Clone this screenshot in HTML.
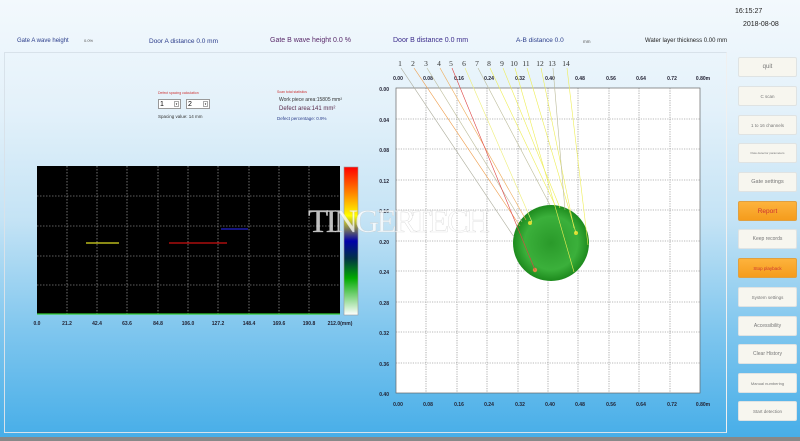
<!DOCTYPE html>
<html><head><meta charset="utf-8"><style>
*{margin:0;padding:0;box-sizing:border-box}
body{width:800px;height:441px;overflow:hidden;font-family:"Liberation Sans",sans-serif;position:relative;
background:linear-gradient(180deg,#f3f9fd 0%,#e3f1fa 25%,#c4e3f5 50%,#7fc6ee 75%,#45ade8 100%);}
.t{position:absolute;font-size:7px;white-space:nowrap}
.btn{position:absolute;left:738px;width:59px;height:20px;background:#f7f6ef;border:1px solid #dfe3e3;border-radius:2px;font-size:4.5px;color:#777;text-align:center;line-height:19px}
.btn.o{background:linear-gradient(#fdb33d,#f59c1c);border-color:#e0a040;color:#c33}
</style></head><body>
<div class="t" style="left:735px;top:8px;font-size:7px;color:#222">16:15:27</div>
<div class="t" style="left:743px;top:21px;font-size:7px;color:#222">2018-08-08</div>
<div class="t" style="left:17px;top:38px;font-size:6px;color:#2a3c8a">Gate A wave height</div>
<div class="t" style="left:84px;top:38px;font-size:4px;color:#555">0.0%</div>
<div class="t" style="left:149px;top:38px;font-size:6.5px;color:#2a3c8a">Door A distance 0.0 mm</div>
<div class="t" style="left:270px;top:37px;font-size:7px;color:#5a2a6a">Gate B wave height 0.0 %</div>
<div class="t" style="left:393px;top:37px;font-size:7px;color:#3a2a8a">Door B distance 0.0 mm</div>
<div class="t" style="left:516px;top:37px;font-size:6.5px;color:#2a3c8a">A-B distance 0.0</div>
<div class="t" style="left:583px;top:39px;font-size:4.5px;color:#555">mm</div>
<div class="t" style="left:645px;top:38px;font-size:6px;color:#222">Water layer thickness 0.00 mm</div>
<div style="position:absolute;left:4px;top:52px;width:723px;height:381px;border:1px solid #d8e2ea;border-right-color:#f0f0f0"></div>
<div style="position:absolute;left:0;top:437px;width:800px;height:4px;background:#888"></div>
<div class="t" style="left:158px;top:91px;font-size:3.5px;color:#c33">Defect spacing calculation</div>
<div style="position:absolute;left:158px;top:99px;width:23px;height:10px;background:#fff;border:1px solid #999;font-size:7px;line-height:9px;padding-left:1px">1<span style="position:absolute;right:1px;top:1px;width:5px;height:6px;border:1px solid #aaa;font-size:3px;line-height:5px;text-align:center">▾</span></div>
<div style="position:absolute;left:186px;top:99px;width:24px;height:10px;background:#fff;border:1px solid #999;font-size:7px;line-height:9px;padding-left:1px">2<span style="position:absolute;right:1px;top:1px;width:5px;height:6px;border:1px solid #aaa;font-size:3px;line-height:5px;text-align:center">▾</span></div>
<div class="t" style="left:158px;top:114px;font-size:4.5px;color:#333">Spacing value: 14 mm</div>
<div class="t" style="left:277px;top:90px;font-size:3.5px;color:#c33">Scan total statistics</div>
<div class="t" style="left:279px;top:97px;font-size:5px;color:#333">Work piece area:15805 mm²</div>
<div class="t" style="left:279px;top:106px;font-size:6px;color:#5a2a4a">Defect area:141 mm²</div>
<div class="t" style="left:277px;top:116px;font-size:4.5px;color:#2a3c8a">Defect percentage: 0.9%</div>

<svg style="position:absolute;left:0;top:0" width="800" height="441" font-family="Liberation Sans" font-weight="bold" font-size="5">
<defs><linearGradient id="cb" x1="0" y1="0" x2="0" y2="1">
<stop offset="0" stop-color="#f00"/><stop offset=".18" stop-color="#f80"/><stop offset=".33" stop-color="#ff0"/><stop offset=".5" stop-color="#00a"/><stop offset=".62" stop-color="#034"/><stop offset=".75" stop-color="#0a0"/><stop offset="1" stop-color="#fff"/></linearGradient>
<radialGradient id="cg"><stop offset="0" stop-color="#2a9a2a"/><stop offset=".7" stop-color="#3bb03b"/><stop offset="1" stop-color="#1d8a1d"/></radialGradient></defs>
<rect x="37" y="166" width="303" height="148" fill="#000"/>
<g stroke="#bbb" stroke-width=".6" stroke-dasharray="1.5,1.5">
<path d="M67 166V314M97 166V314M127 166V314M158 166V314M188 166V314M218 166V314M249 166V314M279 166V314M309 166V314M37 196H340M37 226H340M37 256H340M37 285H340"/></g>
<line x1="37" y1="314" x2="340" y2="314" stroke="#3c3" stroke-width="1.2"/>
<line x1="86" y1="243" x2="119" y2="243" stroke="#dd2" stroke-width="1.3"/>
<line x1="169" y1="243" x2="227" y2="243" stroke="#c11" stroke-width="1.3"/>
<line x1="221" y1="229" x2="248" y2="229" stroke="#22c" stroke-width="1.3"/>
<rect x="344" y="167" width="14" height="148" fill="url(#cb)" stroke="#999" stroke-width=".6"/>
<g fill="#223" text-anchor="middle">
<text x="37" y="325">0.0</text><text x="67" y="325">21.2</text><text x="97" y="325">42.4</text><text x="127" y="325">63.6</text><text x="158" y="325">84.8</text><text x="188" y="325">106.0</text><text x="218" y="325">127.2</text><text x="249" y="325">148.4</text><text x="279" y="325">169.6</text><text x="309" y="325">190.8</text><text x="340" y="325">212.0(mm)</text></g>

<rect x="396" y="88" width="304" height="305" fill="#fff" stroke="#666" stroke-width=".7"/>
<g stroke="#777" stroke-width=".6" stroke-dasharray="1.2,1.2">
<path d="M426 88V393M457 88V393M487 88V393M518 88V393M548 88V393M578 88V393M609 88V393M639 88V393M670 88V393M396 119H700M396 149H700M396 180H700M396 210H700M396 241H700M396 271H700M396 302H700M396 332H700M396 363H700"/></g>
<g fill="#223" text-anchor="middle">
<text x="398" y="80">0.00</text><text x="428" y="80">0.08</text><text x="459" y="80">0.16</text><text x="489" y="80">0.24</text><text x="520" y="80">0.32</text><text x="550" y="80">0.40</text><text x="580" y="80">0.48</text><text x="611" y="80">0.56</text><text x="641" y="80">0.64</text><text x="672" y="80">0.72</text><text x="703" y="80">0.80m</text>
<text x="398" y="406">0.00</text><text x="428" y="406">0.08</text><text x="459" y="406">0.16</text><text x="489" y="406">0.24</text><text x="520" y="406">0.32</text><text x="550" y="406">0.40</text><text x="580" y="406">0.48</text><text x="611" y="406">0.56</text><text x="641" y="406">0.64</text><text x="672" y="406">0.72</text><text x="703" y="406">0.80m</text></g>
<g fill="#223" text-anchor="end">
<text x="389" y="91">0.00</text><text x="389" y="122">0.04</text><text x="389" y="152">0.08</text><text x="389" y="183">0.12</text><text x="389" y="213">0.16</text><text x="389" y="244">0.20</text><text x="389" y="274">0.24</text><text x="389" y="305">0.28</text><text x="389" y="335">0.32</text><text x="389" y="366">0.36</text><text x="389" y="396">0.40</text></g>
<circle cx="551" cy="243" r="38" fill="url(#cg)"/>
<circle cx="530" cy="223" r="2" fill="#dd3"/><circle cx="576" cy="233" r="2" fill="#dd3"/><circle cx="535" cy="270" r="2.2" fill="#d84"/>
<g stroke-width=".6" fill="none">
<line x1="401" y1="68" x2="514" y2="237" stroke="#aa9"/>
<line x1="414" y1="68" x2="520" y2="226" stroke="#e94"/>
<line x1="427" y1="68" x2="522" y2="222" stroke="#bb9"/>
<line x1="440" y1="68" x2="526" y2="220" stroke="#ea5"/>
<line x1="452" y1="68" x2="535" y2="270" stroke="#d44"/>
<line x1="465" y1="68" x2="532" y2="222" stroke="#ee7"/>
<line x1="478" y1="68" x2="550" y2="205" stroke="#bb9"/>
<line x1="490" y1="68" x2="555" y2="205" stroke="#ee5"/>
<line x1="503" y1="68" x2="560" y2="208" stroke="#ee5"/>
<line x1="515" y1="68" x2="574" y2="272" stroke="#ee5"/>
<line x1="527" y1="68" x2="576" y2="233" stroke="#ee5"/>
<line x1="541" y1="68" x2="574" y2="228" stroke="#ee5"/>
<line x1="553" y1="68" x2="565" y2="210" stroke="#bb9"/>
<line x1="567" y1="68" x2="588" y2="245" stroke="#ee5"/></g>
<g fill="#333" font-weight="normal" font-size="7.5" font-family="Liberation Serif" text-anchor="middle">
<text x="400" y="66">1</text><text x="413" y="66">2</text><text x="426" y="66">3</text><text x="439" y="66">4</text><text x="451" y="66">5</text><text x="464" y="66">6</text><text x="477" y="66">7</text><text x="489" y="66">8</text><text x="502" y="66">9</text><text x="514" y="66">10</text><text x="526" y="66">11</text><text x="540" y="66">12</text><text x="552" y="66">13</text><text x="566" y="66">14</text></g>
<text x="308" y="232" font-family="Liberation Serif" font-weight="normal" font-size="33" fill="#fff" fill-opacity=".75" stroke="#ccc" stroke-width=".3" textLength="182">TINGERTECH</text>
</svg>

<div class="btn" style="top:57px;font-size:6px">quit</div>
<div class="btn" style="top:86px">C scan</div>
<div class="btn" style="top:115px">1 to 16 channels</div>
<div class="btn" style="top:143px;font-size:3px">Flaw detector parameters</div>
<div class="btn" style="top:172px;font-size:5.5px">Gate settings</div>
<div class="btn o" style="top:201px;font-size:6.5px">Report</div>
<div class="btn" style="top:229px;font-size:5px">Keep records</div>
<div class="btn o" style="top:258px;font-size:4.5px">Stop playback</div>
<div class="btn" style="top:287px">System settings</div>
<div class="btn" style="top:316px;font-size:5px">Accessibility</div>
<div class="btn" style="top:344px;font-size:5px">Clear History</div>
<div class="btn" style="top:373px;font-size:4px">Manual numbering</div>
<div class="btn" style="top:401px">Start detection</div>
</body></html>
